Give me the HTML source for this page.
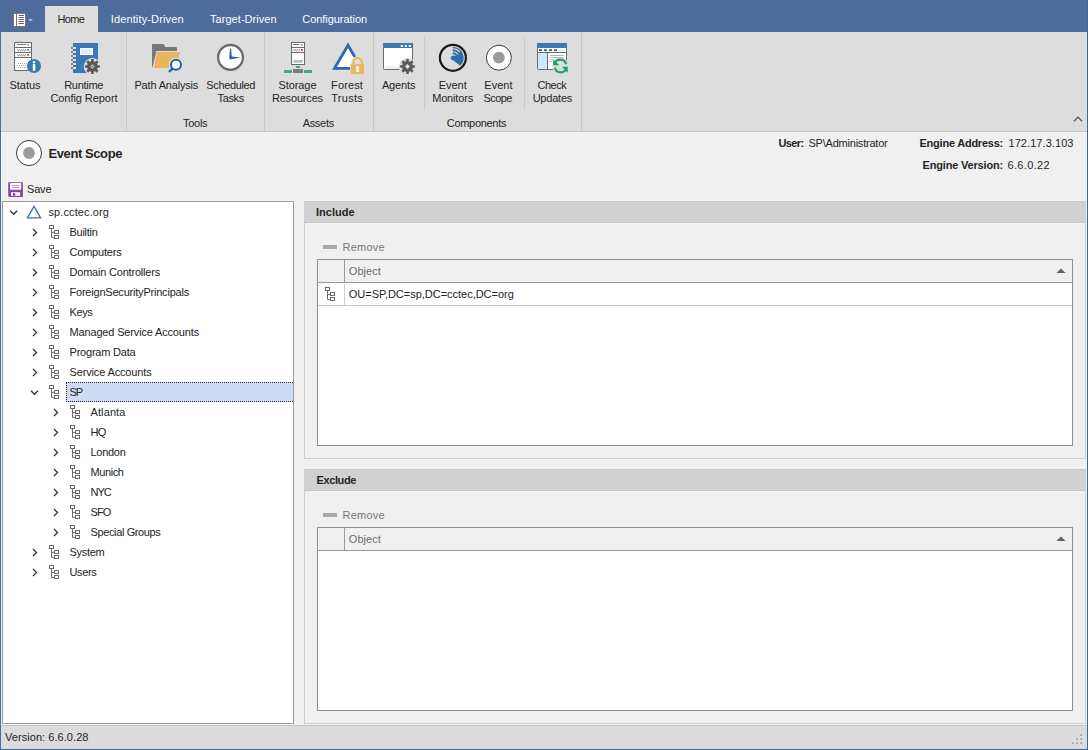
<!DOCTYPE html>
<html lang="en"><head><meta charset="utf-8"><title>Event Scope</title>
<style>
html,body{margin:0;padding:0}
body{width:1088px;height:750px;position:relative;overflow:hidden;background:#f0f0f0;font-family:"Liberation Sans", Arial, sans-serif;font-size:11px;line-height:13px;color:#252525}
div,span,svg{position:absolute;box-sizing:border-box}
.t{white-space:pre}
#titlebar{left:0;top:0;width:1088px;height:32px;background:#4d6b9d}
#hometab{left:45px;top:6px;width:53px;height:27px;background:#dddddd}
#ribbon{left:0;top:32px;width:1088px;height:100px;background:#dddddd;border-bottom:1px solid #c6c6c6}
.gs{top:32px;width:1px;height:100px;background:#c8c8c8}
.is{top:36px;width:1px;height:74px;background:#cbcbcb}
#frameL{left:0;top:0;width:1px;height:750px;background:#4a6fa0}
#frameR{left:1087px;top:0;width:1px;height:750px;background:#44649a}
#frameB{left:0;top:749px;width:1088px;height:1px;background:#44649a}
#tree{left:2px;top:201px;width:292px;height:523px;background:#fff;border:1px solid #9d9d9d}
#sel{left:66px;top:382px;width:227px;height:20px;background:#cddcf4;border:1px dotted #222;border-right:none}
.ph{left:304px;width:782px;height:22px;background:#d1d1d1;border-top:1px solid #c9c9c9;border-bottom:1px solid #c6c6c6}
.pb{left:304px;width:782px;border:1px solid #cfcfcf;border-top:none}
.grid{left:317px;width:756px;background:#fff;border:1px solid #8f8f8f}
.gh{left:0;top:0;width:754px;height:23px;background:#f0f0f0;border-bottom:1px solid #9b9b9b}
.gc{left:26px;top:0;width:1px;background:#9b9b9b}
#status{left:0;top:725px;width:1088px;height:24px;background:#dcdcdc;border-top:1px solid #c4c4c4}
</style></head>
<body>
<div id="titlebar"></div>
<div id="hometab"></div>
<div id="ribbon"></div>
<div class="gs" style="left:126px"></div><div class="gs" style="left:264px"></div><div class="gs" style="left:373px"></div><div class="gs" style="left:581px"></div>
<div class="is" style="left:424px"></div><div class="is" style="left:524px"></div>
<div id="tree"></div>
<div id="sel"></div>
<div class="ph" style="top:201px"></div>
<div class="pb" style="top:223px;height:236px"></div>
<div class="grid" style="top:259px;height:187px"><div class="gh"></div><div class="gc" style="height:23px"></div><div style="left:0;top:45px;width:754px;height:1px;background:#c9c9c9"></div><div class="gc" style="top:24px;height:21px;background:#d0d0d0"></div></div>
<div class="ph" style="top:469px"></div>
<div class="pb" style="top:491px;height:233px"></div>
<div class="grid" style="top:527px;height:184px"><div class="gh"></div><div class="gc" style="height:23px"></div></div>
<div id="status"></div>
<svg width="1088" height="750" viewBox="0 0 1088 750" style="left:0;top:0">
<rect x="13.5" y="13.5" width="12" height="13" fill="#fff" stroke="#777" stroke-width="1"/>
<path d="M16.5,14 V26" stroke="#777" stroke-width="1"/>
<path d="M18.5,15.5 H24 M18.5,17.5 H24 M18.5,19.5 H24 M18.5,21.5 H24 M18.5,23.5 H24" stroke="#666" stroke-width="1"/>
<path d="M28,19 h5 l-2.5,2.5z" fill="#b9c2d2"/>
<rect x="14.5" y="42.5" width="17" height="28" fill="#fff" stroke="#6a6a6a" stroke-width="1"/><path d="M14,47.5 H32" stroke="#6a6a6a" stroke-width="1"/><path d="M14,52.5 H32" stroke="#6a6a6a" stroke-width="1"/><path d="M14,57.5 H32" stroke="#6a6a6a" stroke-width="1"/>
<path d="M17,44.5 H26" stroke="#555" stroke-width="0.8"/><rect x="27.3" y="44" width="1.6" height="1.6" fill="#888"/>
<rect x="17.0" y="49.4" width="1" height="0.9" fill="#707070"/><rect x="18.0" y="50.3" width="1" height="0.9" fill="#707070"/><rect x="19.0" y="49.4" width="1" height="0.9" fill="#707070"/><rect x="20.0" y="50.3" width="1" height="0.9" fill="#707070"/><rect x="21.0" y="49.4" width="1" height="0.9" fill="#707070"/><rect x="22.0" y="50.3" width="1" height="0.9" fill="#707070"/><rect x="23.0" y="49.4" width="1" height="0.9" fill="#707070"/><rect x="24.0" y="50.3" width="1" height="0.9" fill="#707070"/><rect x="25.0" y="49.4" width="1" height="0.9" fill="#707070"/><rect x="27.2" y="49" width="1.8" height="1.8" fill="#3aa876"/>
<rect x="17.0" y="54.4" width="1" height="0.9" fill="#707070"/><rect x="18.0" y="55.3" width="1" height="0.9" fill="#707070"/><rect x="19.0" y="54.4" width="1" height="0.9" fill="#707070"/><rect x="20.0" y="55.3" width="1" height="0.9" fill="#707070"/><rect x="21.0" y="54.4" width="1" height="0.9" fill="#707070"/><rect x="22.0" y="55.3" width="1" height="0.9" fill="#707070"/><rect x="23.0" y="54.4" width="1" height="0.9" fill="#707070"/><rect x="24.0" y="55.3" width="1" height="0.9" fill="#707070"/><rect x="25.0" y="54.4" width="1" height="0.9" fill="#707070"/><rect x="27.2" y="54" width="1.8" height="1.8" fill="#d8442e"/>
<rect x="18.0" y="63.0" width="0.8" height="0.8" fill="#777"/><rect x="20.0" y="63.0" width="0.8" height="0.8" fill="#777"/><rect x="22.0" y="63.0" width="0.8" height="0.8" fill="#777"/><rect x="24.0" y="63.0" width="0.8" height="0.8" fill="#777"/><rect x="26.0" y="63.0" width="0.8" height="0.8" fill="#777"/><rect x="17.0" y="65.1" width="0.8" height="0.8" fill="#777"/><rect x="19.0" y="65.1" width="0.8" height="0.8" fill="#777"/><rect x="21.0" y="65.1" width="0.8" height="0.8" fill="#777"/><rect x="23.0" y="65.1" width="0.8" height="0.8" fill="#777"/><rect x="25.0" y="65.1" width="0.8" height="0.8" fill="#777"/><rect x="18.0" y="67.19999999999999" width="0.8" height="0.8" fill="#777"/><rect x="20.0" y="67.19999999999999" width="0.8" height="0.8" fill="#777"/><rect x="22.0" y="67.19999999999999" width="0.8" height="0.8" fill="#777"/><rect x="24.0" y="67.19999999999999" width="0.8" height="0.8" fill="#777"/><rect x="26.0" y="67.19999999999999" width="0.8" height="0.8" fill="#777"/>
<circle cx="34" cy="66" r="7" fill="#3a76b6"/><rect x="32.8" y="64.1" width="2.5" height="6.7" fill="#fff"/><rect x="32.8" y="61.2" width="2.5" height="2.1" fill="#fff"/>
<rect x="73" y="43" width="25" height="30" fill="#3c78b5"/>
<rect x="71" y="47.1" width="2" height="1.8" fill="#7a7a7a"/><rect x="73" y="47.1" width="3" height="1.8" fill="#f4eee6"/>
<rect x="71" y="51.1" width="2" height="1.8" fill="#7a7a7a"/><rect x="73" y="51.1" width="3" height="1.8" fill="#f4eee6"/>
<rect x="71" y="55.1" width="2" height="1.8" fill="#7a7a7a"/><rect x="73" y="55.1" width="3" height="1.8" fill="#f4eee6"/>
<rect x="71" y="59.1" width="2" height="1.8" fill="#7a7a7a"/><rect x="73" y="59.1" width="3" height="1.8" fill="#f4eee6"/>
<rect x="71" y="63.1" width="2" height="1.8" fill="#7a7a7a"/><rect x="73" y="63.1" width="3" height="1.8" fill="#f4eee6"/>
<rect x="71" y="67.1" width="2" height="1.8" fill="#7a7a7a"/><rect x="73" y="67.1" width="3" height="1.8" fill="#f4eee6"/>
<rect x="80" y="48" width="13" height="7" fill="#fff"/><rect x="81" y="49" width="11" height="5" fill="#e2ecf6"/>
<circle cx="92.4" cy="66.5" r="8.6" fill="#dddddd"/>
<circle cx="92.4" cy="66.5" r="2.5999999999999996" fill="#dddddd"/><path d="M91.12,61.15 L91.11,59.11 L93.69,59.11 L93.68,61.15 L95.27,61.81 L96.71,60.36 L98.54,62.19 L97.09,63.63 L97.75,65.22 L99.79,65.21 L99.79,67.79 L97.75,67.78 L97.09,69.37 L98.54,70.81 L96.71,72.64 L95.27,71.19 L93.68,71.85 L93.69,73.89 L91.11,73.89 L91.12,71.85 L89.53,71.19 L88.09,72.64 L86.26,70.81 L87.71,69.37 L87.05,67.78 L85.01,67.79 L85.01,65.21 L87.05,65.22 L87.71,63.63 L86.26,62.19 L88.09,60.36 L89.53,61.81Z M92.40,64.20 L90.10,66.50 L92.40,68.80 L94.70,66.50Z" fill="#5a5a5a" fill-rule="evenodd"/>
<path d="M92.4,65.3 l1.2,1.2 l-1.2,1.2 l-1.2,-1.2z" fill="#3c78b5"/>
<path d="M152,45 q0,-1 1,-1 H163.5 l2,3 H176 q1,0 1,1 V51 H156.5 L152.6,67 H152z" fill="#787878"/>
<path d="M157,52 H180.2 L176,68 H153.8z" fill="#e9b55e"/>
<circle cx="176" cy="64.7" r="7.3" fill="#dddddd"/>
<circle cx="176" cy="64.7" r="5" fill="#fff" stroke="#1f62ab" stroke-width="2"/>
<path d="M172.6,68.4 L169,72" stroke="#1f62ab" stroke-width="2.2"/>
<circle cx="230.5" cy="57.4" r="12.4" fill="#fff" stroke="#6b6b6b" stroke-width="2.3"/>
<path d="M229.9,48.8 L231.1,48.8 L231.9,56.5 L240.7,57.5 L231.6,59.3 L229.7,59.2 L229.2,58z" fill="#2b69ae"/>
<rect x="291.5" y="42.5" width="13" height="22" fill="#fff" stroke="#6a6a6a" stroke-width="1"/><path d="M291,47.5 H305" stroke="#6a6a6a" stroke-width="1"/><path d="M291,52.5 H305" stroke="#6a6a6a" stroke-width="1"/>
<path d="M293,44.5 H299.5" stroke="#555" stroke-width="0.8"/><rect x="301" y="44" width="1.6" height="1.6" fill="#888"/>
<rect x="293.0" y="49.4" width="1" height="0.9" fill="#707070"/><rect x="294.0" y="50.3" width="1" height="0.9" fill="#707070"/><rect x="295.0" y="49.4" width="1" height="0.9" fill="#707070"/><rect x="296.0" y="50.3" width="1" height="0.9" fill="#707070"/><rect x="297.0" y="49.4" width="1" height="0.9" fill="#707070"/><rect x="298.0" y="50.3" width="1" height="0.9" fill="#707070"/><rect x="299.0" y="49.4" width="1" height="0.9" fill="#707070"/><rect x="301" y="49" width="1.8" height="1.8" fill="#d8442e"/>
<rect x="293.5" y="59.9" width="1" height="0.9" fill="#686868"/><rect x="293.5" y="61.7" width="1" height="0.9" fill="#686868"/><rect x="294.5" y="60.8" width="1" height="0.9" fill="#686868"/><rect x="295.5" y="59.9" width="1" height="0.9" fill="#686868"/><rect x="295.5" y="61.7" width="1" height="0.9" fill="#686868"/><rect x="296.5" y="60.8" width="1" height="0.9" fill="#686868"/><rect x="297.5" y="59.9" width="1" height="0.9" fill="#686868"/><rect x="297.5" y="61.7" width="1" height="0.9" fill="#686868"/><rect x="298.5" y="60.8" width="1" height="0.9" fill="#686868"/><rect x="299.5" y="59.9" width="1" height="0.9" fill="#686868"/><rect x="299.5" y="61.7" width="1" height="0.9" fill="#686868"/><rect x="300.5" y="60.8" width="1" height="0.9" fill="#686868"/><rect x="301.5" y="59.9" width="1" height="0.9" fill="#686868"/><rect x="301.5" y="61.7" width="1" height="0.9" fill="#686868"/>
<rect x="296" y="66" width="4" height="2" fill="#3fa97a"/><rect x="293" y="69" width="10" height="4" fill="#7b7b7b"/><rect x="284" y="70" width="8" height="3" fill="#3fa97a"/><rect x="304" y="70" width="8" height="3" fill="#3fa97a"/>
<path d="M348,45.3 L334.5,68.3 H361.5z" fill="#fff" stroke="#2b68ad" stroke-width="2.8" stroke-linejoin="miter"/>
<path d="M353.3,64.5 V62.2 a4.3,4.3 0 0 1 8.6,0 V64.5" fill="#dddddd" stroke="#dddddd" stroke-width="4"/>
<rect x="350" y="63.3" width="15" height="11.6" fill="#dddddd"/>
<path d="M353.3,64.5 V62.2 a4.3,4.3 0 0 1 8.6,0 V64.5" fill="none" stroke="#e9b55e" stroke-width="2"/>
<rect x="351" y="64.3" width="13" height="9.6" fill="#e9b55e"/>
<path d="M357.5,66 a1.5,1.5 0 0 1 1.5,1.5 q0,0.7 -0.6,1.1 l0.7,3.4 h-3.2 l0.7,-3.4 q-0.6,-0.4 -0.6,-1.1 a1.5,1.5 0 0 1 1.5,-1.5z" fill="#fff"/>
<rect x="383.5" y="43.5" width="29" height="26" rx="1" fill="#fff" stroke="#6a6a6a"/>
<rect x="384" y="66" width="28" height="3" fill="#f0f0f0"/>
<rect x="383" y="43" width="30" height="5" fill="#3c78b5"/>
<rect x="400.8" y="45" width="2" height="2" fill="#fff"/><rect x="404.8" y="45" width="2" height="2" fill="#fff"/><rect x="408.8" y="45" width="2" height="2" fill="#fff"/>
<circle cx="407.5" cy="66.5" r="8.6" fill="#dddddd"/>
<circle cx="407.5" cy="66.5" r="2.6999999999999997" fill="#e6e6e6"/><path d="M406.22,61.15 L406.21,59.11 L408.79,59.11 L408.78,61.15 L410.37,61.81 L411.81,60.36 L413.64,62.19 L412.19,63.63 L412.85,65.22 L414.89,65.21 L414.89,67.79 L412.85,67.78 L412.19,69.37 L413.64,70.81 L411.81,72.64 L410.37,71.19 L408.78,71.85 L408.79,73.89 L406.21,73.89 L406.22,71.85 L404.63,71.19 L403.19,72.64 L401.36,70.81 L402.81,69.37 L402.15,67.78 L400.11,67.79 L400.11,65.21 L402.15,65.22 L402.81,63.63 L401.36,62.19 L403.19,60.36 L404.63,61.81Z M407.50,64.10 L405.10,66.50 L407.50,68.90 L409.90,66.50Z" fill="#5a5a5a" fill-rule="evenodd"/>
<circle cx="452.9" cy="57.8" r="13" fill="none" stroke="#1a1a1a" stroke-width="2.2"/>
<path d="M452.70,56.30 L452.70,47.10 A10.75,10.75 0 0 1 460.13,65.83 L451.70,59.30z" fill="#2f6cad"/>
<circle cx="452.60" cy="58.00" r="1.9" fill="#2f6cad"/>
<path d="M452.48,54.83 A3.0,3.0 0 0 1 454.83,55.50" fill="none" stroke="#dddddd" stroke-width="1.1" stroke-linecap="round"/>
<path d="M452.06,51.86 A6.0,6.0 0 0 1 457.50,53.94" fill="none" stroke="#dddddd" stroke-width="1.1" stroke-linecap="round"/>
<path d="M451.65,48.89 A9.0,9.0 0 0 1 459.59,51.78" fill="none" stroke="#dddddd" stroke-width="1.1" stroke-linecap="round"/>
<circle cx="498.9" cy="57.7" r="12.5" fill="#fff" stroke="#3a3a3a" stroke-width="1"/><circle cx="498.9" cy="57.7" r="5.9" fill="#9b9b9b"/>
<rect x="537.5" y="43.5" width="29" height="26" rx="1" fill="#fff" stroke="#6a6a6a"/>
<rect x="537" y="43" width="30" height="5" fill="#3c78b5"/>
<rect x="538" y="53" width="9" height="16" fill="#cdeafc"/>
<path d="M538,52.5 H566 M547.5,53 V69" stroke="#6a6a6a" stroke-width="1"/>
<rect x="539" y="49.3" width="3" height="1.8" fill="#555"/>
<rect x="544" y="49.3" width="3" height="1.8" fill="#555"/>
<rect x="549" y="49.3" width="3" height="1.8" fill="#555"/>
<rect x="554" y="49.3" width="3" height="1.8" fill="#555"/>
<rect x="558" y="49.3" width="7" height="1.8" fill="#eee"/>
<path d="M550,55.5 H564 M550,57.6 H564 M550,59.7 H553 M550,61.6 H552" stroke="#9a9a9a" stroke-width="0.7"/>
<circle cx="560.5" cy="66" r="8.3" fill="#dddddd"/>
<path d="M554.6,63.6 A6.1,6.1 0 0 1 566.2,64.2" fill="none" stroke="#23a06b" stroke-width="2.2"/>
<path d="M566.4,68.4 A6.1,6.1 0 0 1 554.8,67.8" fill="none" stroke="#23a06b" stroke-width="2.2"/>
<path d="M553.2,59.3 V65.3 H559.2z" fill="#23a06b"/>
<path d="M567.8,72.7 V66.7 H561.8z" fill="#23a06b"/>
<circle cx="29" cy="153" r="12.5" fill="#fff" stroke="#3a3a3a" stroke-width="1"/><circle cx="29" cy="153" r="5.9" fill="#9b9b9b"/>
<path d="M8.2,182.2 H22.9 V196.9 H9.4 L8.2,195.7z" fill="#8a42ab"/>
<rect x="10" y="183.1" width="11.2" height="6.6" rx="0.8" fill="#fff"/><path d="M11.9,185.6 H19 M11.9,187.4 H19" stroke="#9c9c9c" stroke-width="0.9"/>
<rect x="11" y="192.2" width="9.1" height="3.6" fill="#fff"/><rect x="13" y="193" width="2.2" height="2.8" fill="#8a42ab"/>
<path d="M10.2,210.8 l3.5,3.5 l3.5,-3.5" fill="none" stroke="#333" stroke-width="1.3"/>
<path d="M34,206.4 L27.4,217.9 H40.6z" fill="#fff" stroke="#3a70b0" stroke-width="1.3"/>
<path d="M33,229.0 l3.5,3.5 l-3.5,3.5" fill="none" stroke="#333" stroke-width="1.3"/>
<g fill="none" stroke="#6a6a6a" stroke-width="1" transform="translate(49.0,225)"><rect x="0.5" y="0.5" width="4" height="3"/><path d="M2.5,3.5 V12.4 H5.5 M2.5,7.4 H5.5"/><rect x="5.5" y="5.5" width="4" height="3"/><rect x="5.5" y="10.5" width="4" height="3"/></g>
<path d="M33,249.0 l3.5,3.5 l-3.5,3.5" fill="none" stroke="#333" stroke-width="1.3"/>
<g fill="none" stroke="#6a6a6a" stroke-width="1" transform="translate(49.0,245)"><rect x="0.5" y="0.5" width="4" height="3"/><path d="M2.5,3.5 V12.4 H5.5 M2.5,7.4 H5.5"/><rect x="5.5" y="5.5" width="4" height="3"/><rect x="5.5" y="10.5" width="4" height="3"/></g>
<path d="M33,269.0 l3.5,3.5 l-3.5,3.5" fill="none" stroke="#333" stroke-width="1.3"/>
<g fill="none" stroke="#6a6a6a" stroke-width="1" transform="translate(49.0,265)"><rect x="0.5" y="0.5" width="4" height="3"/><path d="M2.5,3.5 V12.4 H5.5 M2.5,7.4 H5.5"/><rect x="5.5" y="5.5" width="4" height="3"/><rect x="5.5" y="10.5" width="4" height="3"/></g>
<path d="M33,289.0 l3.5,3.5 l-3.5,3.5" fill="none" stroke="#333" stroke-width="1.3"/>
<g fill="none" stroke="#6a6a6a" stroke-width="1" transform="translate(49.0,285)"><rect x="0.5" y="0.5" width="4" height="3"/><path d="M2.5,3.5 V12.4 H5.5 M2.5,7.4 H5.5"/><rect x="5.5" y="5.5" width="4" height="3"/><rect x="5.5" y="10.5" width="4" height="3"/></g>
<path d="M33,309.0 l3.5,3.5 l-3.5,3.5" fill="none" stroke="#333" stroke-width="1.3"/>
<g fill="none" stroke="#6a6a6a" stroke-width="1" transform="translate(49.0,305)"><rect x="0.5" y="0.5" width="4" height="3"/><path d="M2.5,3.5 V12.4 H5.5 M2.5,7.4 H5.5"/><rect x="5.5" y="5.5" width="4" height="3"/><rect x="5.5" y="10.5" width="4" height="3"/></g>
<path d="M33,329.0 l3.5,3.5 l-3.5,3.5" fill="none" stroke="#333" stroke-width="1.3"/>
<g fill="none" stroke="#6a6a6a" stroke-width="1" transform="translate(49.0,325)"><rect x="0.5" y="0.5" width="4" height="3"/><path d="M2.5,3.5 V12.4 H5.5 M2.5,7.4 H5.5"/><rect x="5.5" y="5.5" width="4" height="3"/><rect x="5.5" y="10.5" width="4" height="3"/></g>
<path d="M33,349.0 l3.5,3.5 l-3.5,3.5" fill="none" stroke="#333" stroke-width="1.3"/>
<g fill="none" stroke="#6a6a6a" stroke-width="1" transform="translate(49.0,345)"><rect x="0.5" y="0.5" width="4" height="3"/><path d="M2.5,3.5 V12.4 H5.5 M2.5,7.4 H5.5"/><rect x="5.5" y="5.5" width="4" height="3"/><rect x="5.5" y="10.5" width="4" height="3"/></g>
<path d="M33,369.0 l3.5,3.5 l-3.5,3.5" fill="none" stroke="#333" stroke-width="1.3"/>
<g fill="none" stroke="#6a6a6a" stroke-width="1" transform="translate(49.0,365)"><rect x="0.5" y="0.5" width="4" height="3"/><path d="M2.5,3.5 V12.4 H5.5 M2.5,7.4 H5.5"/><rect x="5.5" y="5.5" width="4" height="3"/><rect x="5.5" y="10.5" width="4" height="3"/></g>
<path d="M31,390.8 l3.5,3.5 l3.5,-3.5" fill="none" stroke="#333" stroke-width="1.3"/>
<g fill="none" stroke="#6a6a6a" stroke-width="1" transform="translate(49.0,385)"><rect x="0.5" y="0.5" width="4" height="3"/><path d="M2.5,3.5 V12.4 H5.5 M2.5,7.4 H5.5"/><rect x="5.5" y="5.5" width="4" height="3"/><rect x="5.5" y="10.5" width="4" height="3"/></g>
<path d="M54,409.0 l3.5,3.5 l-3.5,3.5" fill="none" stroke="#333" stroke-width="1.3"/>
<g fill="none" stroke="#6a6a6a" stroke-width="1" transform="translate(70.0,405)"><rect x="0.5" y="0.5" width="4" height="3"/><path d="M2.5,3.5 V12.4 H5.5 M2.5,7.4 H5.5"/><rect x="5.5" y="5.5" width="4" height="3"/><rect x="5.5" y="10.5" width="4" height="3"/></g>
<path d="M54,429.0 l3.5,3.5 l-3.5,3.5" fill="none" stroke="#333" stroke-width="1.3"/>
<g fill="none" stroke="#6a6a6a" stroke-width="1" transform="translate(70.0,425)"><rect x="0.5" y="0.5" width="4" height="3"/><path d="M2.5,3.5 V12.4 H5.5 M2.5,7.4 H5.5"/><rect x="5.5" y="5.5" width="4" height="3"/><rect x="5.5" y="10.5" width="4" height="3"/></g>
<path d="M54,449.0 l3.5,3.5 l-3.5,3.5" fill="none" stroke="#333" stroke-width="1.3"/>
<g fill="none" stroke="#6a6a6a" stroke-width="1" transform="translate(70.0,445)"><rect x="0.5" y="0.5" width="4" height="3"/><path d="M2.5,3.5 V12.4 H5.5 M2.5,7.4 H5.5"/><rect x="5.5" y="5.5" width="4" height="3"/><rect x="5.5" y="10.5" width="4" height="3"/></g>
<path d="M54,469.0 l3.5,3.5 l-3.5,3.5" fill="none" stroke="#333" stroke-width="1.3"/>
<g fill="none" stroke="#6a6a6a" stroke-width="1" transform="translate(70.0,465)"><rect x="0.5" y="0.5" width="4" height="3"/><path d="M2.5,3.5 V12.4 H5.5 M2.5,7.4 H5.5"/><rect x="5.5" y="5.5" width="4" height="3"/><rect x="5.5" y="10.5" width="4" height="3"/></g>
<path d="M54,489.0 l3.5,3.5 l-3.5,3.5" fill="none" stroke="#333" stroke-width="1.3"/>
<g fill="none" stroke="#6a6a6a" stroke-width="1" transform="translate(70.0,485)"><rect x="0.5" y="0.5" width="4" height="3"/><path d="M2.5,3.5 V12.4 H5.5 M2.5,7.4 H5.5"/><rect x="5.5" y="5.5" width="4" height="3"/><rect x="5.5" y="10.5" width="4" height="3"/></g>
<path d="M54,509.0 l3.5,3.5 l-3.5,3.5" fill="none" stroke="#333" stroke-width="1.3"/>
<g fill="none" stroke="#6a6a6a" stroke-width="1" transform="translate(70.0,505)"><rect x="0.5" y="0.5" width="4" height="3"/><path d="M2.5,3.5 V12.4 H5.5 M2.5,7.4 H5.5"/><rect x="5.5" y="5.5" width="4" height="3"/><rect x="5.5" y="10.5" width="4" height="3"/></g>
<path d="M54,529.0 l3.5,3.5 l-3.5,3.5" fill="none" stroke="#333" stroke-width="1.3"/>
<g fill="none" stroke="#6a6a6a" stroke-width="1" transform="translate(70.0,525)"><rect x="0.5" y="0.5" width="4" height="3"/><path d="M2.5,3.5 V12.4 H5.5 M2.5,7.4 H5.5"/><rect x="5.5" y="5.5" width="4" height="3"/><rect x="5.5" y="10.5" width="4" height="3"/></g>
<path d="M33,549.0 l3.5,3.5 l-3.5,3.5" fill="none" stroke="#333" stroke-width="1.3"/>
<g fill="none" stroke="#6a6a6a" stroke-width="1" transform="translate(49.0,545)"><rect x="0.5" y="0.5" width="4" height="3"/><path d="M2.5,3.5 V12.4 H5.5 M2.5,7.4 H5.5"/><rect x="5.5" y="5.5" width="4" height="3"/><rect x="5.5" y="10.5" width="4" height="3"/></g>
<path d="M33,569.0 l3.5,3.5 l-3.5,3.5" fill="none" stroke="#333" stroke-width="1.3"/>
<g fill="none" stroke="#6a6a6a" stroke-width="1" transform="translate(49.0,565)"><rect x="0.5" y="0.5" width="4" height="3"/><path d="M2.5,3.5 V12.4 H5.5 M2.5,7.4 H5.5"/><rect x="5.5" y="5.5" width="4" height="3"/><rect x="5.5" y="10.5" width="4" height="3"/></g>
<g fill="none" stroke="#6a6a6a" stroke-width="1" transform="translate(325,287)"><rect x="0.5" y="0.5" width="4" height="3"/><path d="M2.5,3.5 V12.4 H5.5 M2.5,7.4 H5.5"/><rect x="5.5" y="5.5" width="4" height="3"/><rect x="5.5" y="10.5" width="4" height="3"/></g>
<rect x="323" y="245" width="14" height="4" fill="#a9a9a9"/><rect x="323" y="513" width="14" height="4" fill="#a9a9a9"/>
<path d="M1056.4,273.1 h9.2 l-4.6,-4.7z" fill="#626262"/><path d="M1056.4,541.1 h9.2 l-4.6,-4.7z" fill="#626262"/>
<path d="M1074,121.2 l4,-4.1 l4,4.1" fill="none" stroke="#555" stroke-width="1.3"/>
<rect x="1080.3" y="734.3" width="1.7" height="1.7" fill="#a3a3a3"/><rect x="1076.3" y="738.3" width="1.7" height="1.7" fill="#a3a3a3"/><rect x="1080.3" y="738.3" width="1.7" height="1.7" fill="#a3a3a3"/><rect x="1072.3" y="742.3" width="1.7" height="1.7" fill="#a3a3a3"/><rect x="1076.3" y="742.3" width="1.7" height="1.7" fill="#a3a3a3"/><rect x="1080.3" y="742.3" width="1.7" height="1.7" fill="#a3a3a3"/>
</svg>
<span class="t" style="left:57.60px;top:12.69px;letter-spacing:-0.686px;">Home</span>
<span class="t" style="left:110.70px;top:12.69px;color:#fff;letter-spacing:0.139px;">Identity-Driven</span>
<span class="t" style="left:210.00px;top:12.69px;color:#fff;letter-spacing:0.051px;">Target-Driven</span>
<span class="t" style="left:302.30px;top:12.69px;color:#fff;letter-spacing:-0.049px;">Configuration</span>
<span class="t" style="left:9.48px;top:78.69px;letter-spacing:-0.031px;">Status</span>
<span class="t" style="left:64.16px;top:78.69px;letter-spacing:-0.281px;">Runtime</span>
<span class="t" style="left:50.42px;top:91.69px;letter-spacing:-0.060px;">Config Report</span>
<span class="t" style="left:134.46px;top:78.69px;letter-spacing:-0.181px;">Path Analysis</span>
<span class="t" style="left:206.37px;top:78.69px;letter-spacing:-0.367px;">Scheduled</span>
<span class="t" style="left:217.53px;top:91.69px;letter-spacing:-0.345px;">Tasks</span>
<span class="t" style="left:278.46px;top:78.69px;letter-spacing:-0.076px;">Storage</span>
<span class="t" style="left:271.91px;top:91.69px;letter-spacing:-0.175px;">Resources</span>
<span class="t" style="left:331.07px;top:78.69px;letter-spacing:0.135px;">Forest</span>
<span class="t" style="left:331.15px;top:91.69px;letter-spacing:0.307px;">Trusts</span>
<span class="t" style="left:381.89px;top:78.69px;letter-spacing:-0.125px;">Agents</span>
<span class="t" style="left:438.69px;top:78.69px;letter-spacing:-0.028px;">Event</span>
<span class="t" style="left:432.17px;top:91.69px;letter-spacing:-0.161px;">Monitors</span>
<span class="t" style="left:484.27px;top:78.69px;letter-spacing:0.032px;">Event</span>
<span class="t" style="left:483.46px;top:91.69px;letter-spacing:-0.581px;">Scope</span>
<span class="t" style="left:537.46px;top:78.69px;letter-spacing:-0.477px;">Check</span>
<span class="t" style="left:532.64px;top:91.69px;letter-spacing:-0.212px;">Updates</span>
<span class="t" style="left:183.01px;top:116.69px;letter-spacing:-0.277px;">Tools</span>
<span class="t" style="left:302.65px;top:116.69px;letter-spacing:-0.303px;">Assets</span>
<span class="t" style="left:446.80px;top:116.69px;letter-spacing:-0.308px;">Components</span>
<span class="t" style="left:48.50px;top:146.00px;font-size:13px;line-height:15px;font-weight:bold;letter-spacing:-0.412px;">Event Scope</span>
<span class="t" style="left:778.50px;top:136.69px;font-weight:bold;letter-spacing:-0.625px;">User:</span>
<span class="t" style="left:808.50px;top:136.69px;letter-spacing:-0.221px;">SP\Administrator</span>
<span class="t" style="left:919.50px;top:136.69px;font-weight:bold;letter-spacing:-0.233px;">Engine Address:</span>
<span class="t" style="left:1008.50px;top:136.69px;letter-spacing:0.064px;">172.17.3.103</span>
<span class="t" style="left:922.50px;top:158.69px;font-weight:bold;letter-spacing:-0.176px;">Engine Version:</span>
<span class="t" style="left:1007.50px;top:158.69px;letter-spacing:0.342px;">6.6.0.22</span>
<span class="t" style="left:27.10px;top:182.69px;letter-spacing:-0.220px;">Save</span>
<span class="t" style="left:48.50px;top:205.69px;letter-spacing:0.099px;">sp.cctec.org</span>
<span class="t" style="left:69.50px;top:225.69px;letter-spacing:-0.281px;">Builtin</span>
<span class="t" style="left:69.50px;top:245.69px;letter-spacing:-0.200px;">Computers</span>
<span class="t" style="left:69.50px;top:265.69px;letter-spacing:-0.203px;">Domain Controllers</span>
<span class="t" style="left:69.50px;top:285.69px;letter-spacing:-0.209px;">ForeignSecurityPrincipals</span>
<span class="t" style="left:69.50px;top:305.69px;letter-spacing:-0.367px;">Keys</span>
<span class="t" style="left:69.50px;top:325.69px;letter-spacing:-0.159px;">Managed Service Accounts</span>
<span class="t" style="left:69.50px;top:345.69px;letter-spacing:-0.207px;">Program Data</span>
<span class="t" style="left:69.50px;top:365.69px;letter-spacing:-0.148px;">Service Accounts</span>
<span class="t" style="left:69.50px;top:385.69px;letter-spacing:-1.000px;">SP</span>
<span class="t" style="left:90.50px;top:405.69px;letter-spacing:0.107px;">Atlanta</span>
<span class="t" style="left:90.50px;top:425.69px;letter-spacing:-0.750px;">HQ</span>
<span class="t" style="left:90.50px;top:445.69px;letter-spacing:-0.286px;">London</span>
<span class="t" style="left:90.50px;top:465.69px;letter-spacing:-0.411px;">Munich</span>
<span class="t" style="left:90.50px;top:485.69px;letter-spacing:-1.000px;">NYC</span>
<span class="t" style="left:90.50px;top:505.69px;letter-spacing:-0.875px;">SFO</span>
<span class="t" style="left:90.50px;top:525.69px;letter-spacing:-0.373px;">Special Groups</span>
<span class="t" style="left:69.50px;top:545.69px;letter-spacing:-0.281px;">System</span>
<span class="t" style="left:69.50px;top:565.69px;letter-spacing:-0.347px;">Users</span>
<span class="t" style="left:316.00px;top:205.69px;font-weight:bold;">Include</span>
<span class="t" style="left:316.50px;top:473.69px;font-weight:bold;letter-spacing:-0.384px;">Exclude</span>
<span class="t" style="left:342.50px;top:240.69px;color:#767676;letter-spacing:0.255px;">Remove</span>
<span class="t" style="left:342.50px;top:508.69px;color:#767676;letter-spacing:0.255px;">Remove</span>
<span class="t" style="left:348.80px;top:264.69px;color:#6c6c74;letter-spacing:0.034px;">Object</span>
<span class="t" style="left:348.80px;top:532.69px;color:#6c6c74;letter-spacing:0.034px;">Object</span>
<span class="t" style="left:348.80px;top:287.69px;letter-spacing:-0.018px;">OU=SP,DC=sp,DC=cctec,DC=org</span>
<span class="t" style="left:5.00px;top:730.69px;letter-spacing:0.055px;">Version: 6.6.0.28</span>
<div id="frameL"></div><div id="frameR"></div><div id="frameB"></div>
</body></html>
